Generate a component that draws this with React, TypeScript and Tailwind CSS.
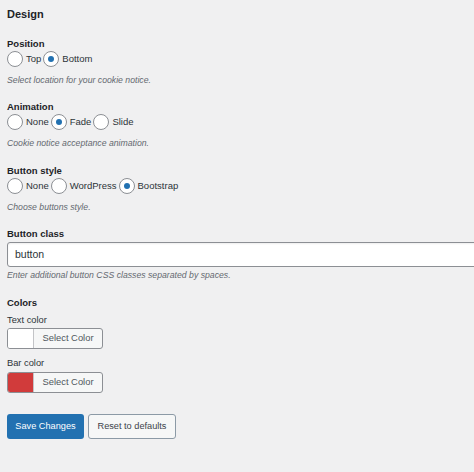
import React from "react";

type RadioOpt = { label: string; checked?: boolean };

function Radio({ label, checked }: RadioOpt) {
  return (
    <label className="flex items-center gap-[3px] mr-[2px]">
      <span className="w-4 h-4 rounded-full border border-[#8c8f94] bg-white flex items-center justify-center shrink-0">
        {checked && <span className="w-[6px] h-[6px] rounded-full bg-[#2271b1]" />}
      </span>
      <span className="text-[9.5px] leading-[14px] text-[#2c3338]">{label}</span>
    </label>
  );
}

function RadioSection({
  title,
  options,
  help,
  mt,
}: {
  title: string;
  options: RadioOpt[];
  help: string;
  mt: string;
}) {
  return (
    <div className={mt}>
      <div className="text-[9.5px] leading-[14px] font-bold text-[#1d2327]">{title}</div>
      <div className="flex items-center h-4">
        {options.map((o) => (
          <Radio key={o.label} {...o} />
        ))}
      </div>
      <p className="mt-[6px] text-[8.7px] leading-[14px] italic text-[#646970]">{help}</p>
    </div>
  );
}

function ColorPicker({ swatch, mt }: { swatch: string; mt: string }) {
  return (
    <div className={`${mt} flex w-[96px] h-[21px] border border-[#8c8f94] rounded-[3px] overflow-hidden bg-[#f6f7f7]`}>
      <span className="w-[26px] h-full border-r border-[#c3c4c7]" style={{ background: swatch }} />
      <span className="flex-1 flex items-center justify-center text-[9.4px] text-[#50575e]">
        Select Color
      </span>
    </div>
  );
}

export default function App() {
  return (
    <div
      className="w-[474px] h-[472px] bg-[#f0f0f1] pl-[7px] pt-[6px] overflow-hidden"
      style={{ fontFamily: '"Liberation Sans", Arial, sans-serif' }}
    >
      <h2 className="text-[11px] leading-4 font-bold text-[#1d2327]">Design</h2>

      <RadioSection
        mt="mt-[15px]"
        title="Position"
        options={[{ label: "Top" }, { label: "Bottom", checked: true }]}
        help="Select location for your cookie notice."
      />
      <RadioSection
        mt="mt-[13px]"
        title="Animation"
        options={[{ label: "None" }, { label: "Fade", checked: true }, { label: "Slide" }]}
        help="Cookie notice acceptance animation."
      />
      <RadioSection
        mt="mt-[14px]"
        title="Button style"
        options={[
          { label: "None" },
          { label: "WordPress" },
          { label: "Bootstrap", checked: true },
        ]}
        help="Choose buttons style."
      />

      {/* Button class */}
      <div className="mt-[13px]">
        <div className="text-[9.5px] leading-[14px] font-bold text-[#1d2327]">Button class</div>
        <div className="mt-px h-[25px] -mr-[20px] bg-white border border-[#8c8f94] rounded-[3px] flex items-center pl-[7px] text-[10.5px] text-[#2c3338] shadow-[inset_0_1px_2px_rgba(0,0,0,0.07)]">
          button
        </div>
        <p className="mt-px text-[8.7px] leading-[14px] italic text-[#646970]">
          Enter additional button CSS classes separated by spaces.
        </p>
      </div>

      {/* Colors */}
      <div className="mt-[14px]">
        <div className="text-[9.5px] leading-[14px] font-bold text-[#1d2327]">Colors</div>
        <div className="mt-[3px] text-[9.3px] leading-[14px] text-[#2c3338]">Text color</div>
        <ColorPicker swatch="#ffffff" mt="mt-px" />
        <div className="mt-[7px] text-[9.3px] leading-[14px] text-[#2c3338]">Bar color</div>
        <ColorPicker swatch="#d13b3b" mt="mt-[2px]" />
      </div>

      <div className="mt-[21px] flex gap-[4px]">
        <button className="h-[25px] w-[77px] rounded-[3px] bg-[#2271b1] text-white text-[9.2px]">
          Save Changes
        </button>
        <button className="h-[25px] w-[88px] rounded-[3px] bg-[#f6f7f7] border border-[#8c9aa6] text-[#3c434a] text-[9.2px]">
          Reset to defaults
        </button>
      </div>
    </div>
  );
}
